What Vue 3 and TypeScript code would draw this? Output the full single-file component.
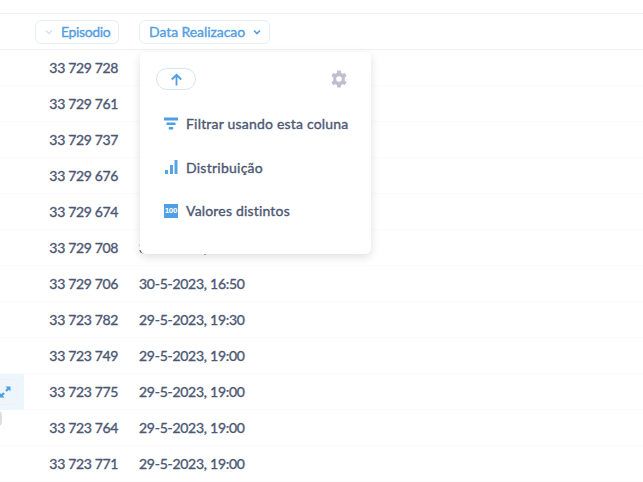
<script setup lang="ts">
interface Row { id: string; date: string }
const rows: Row[] = [
  { id: '33 729 728', date: '' },
  { id: '33 729 761', date: '' },
  { id: '33 729 737', date: '' },
  { id: '33 729 676', date: '' },
  { id: '33 729 674', date: '' },
  { id: '33 729 708', date: '30-5-2023, 16:50' },
  { id: '33 729 706', date: '30-5-2023, 16:50' },
  { id: '33 723 782', date: '29-5-2023, 19:30' },
  { id: '33 723 749', date: '29-5-2023, 19:00' },
  { id: '33 723 775', date: '29-5-2023, 19:00' },
  { id: '33 723 764', date: '29-5-2023, 19:00' },
  { id: '33 723 771', date: '29-5-2023, 19:00' },
]
</script>

<template>
  <div class="page">
    <div class="top"></div>
    <div class="head">
      <div class="pill first">
        <svg class="chev faint" width="8" height="6" viewBox="0 0 8 6"><path d="M1 1.500 4 4.500 7 1.500" fill="none" stroke="currentColor" stroke-width="1.400"/></svg>
        <span>Episodio</span>
      </div>
      <div class="pill second">
        <span>Data Realizacao</span>
        <svg class="chev" width="8" height="6" viewBox="0 0 8 6"><path d="M1 1.500 4 4.500 7 1.500" fill="none" stroke="currentColor" stroke-width="1.600"/></svg>
      </div>
    </div>
    <div class="body">
      <div v-for="(r, i) in rows" :key="r.id" class="row">
        <div class="gutter" :class="{ hover: i === 9 }">
          <div v-if="i === 9" class="expand">
            <svg width="12" height="12" viewBox="0 0 12 12"><path d="M6.500 0.500H11.500V5.500L9.800 3.800 7.800 5.800 6.200 4.200 8.200 2.200ZM5.500 11.500H0.500V6.500L2.200 8.200 4.200 6.200 5.800 7.800 3.800 9.800Z" fill="#509ee3"/></svg>
          </div>
        </div>
        <div class="id">{{ r.id }}</div>
        <div class="date">{{ r.date }}</div>
      </div>
    </div>
    <div class="stub"></div>

    <div class="popover">
      <div class="pop-top">
        <div class="sort">
          <svg width="13" height="13" viewBox="0 0 13 13"><path d="M6.500 12.500V2M1.800 6.500 6.500 1.800 11.200 6.500" fill="none" stroke="#509ee3" stroke-width="1.800"/></svg>
        </div>
        <svg class="gear" width="18" height="18" viewBox="0 0 18 18">
          <path fill-rule="evenodd" fill="#bfbfd0" d="M7.300 0.500H10.700L11.200 3 12.500 3.700 14.900 2.900 16.600 5.800 14.700 7.500V9V10.500L16.600 12.200 14.900 15.100 12.500 14.300 11.200 15 10.700 17.500H7.300L6.800 15 5.500 14.300 3.100 15.100 1.400 12.200 3.300 10.500V7.500L1.400 5.800 3.100 2.900 5.500 3.700 6.800 3ZM9 6.200A2.800 2.800 0 1 0 9 11.800 2.800 2.800 0 0 0 9 6.200Z"/>
        </svg>
      </div>
      <div class="item filter">
        <svg class="ic" width="14" height="14" viewBox="0 0 14 14"><path fill="#509ee3" d="M0 0.500H14V3.500H0ZM2.500 5.500H11.500V8H2.500ZM4.800 10H9.200V12.500H4.800Z"/></svg>
        <span>Filtrar usando esta coluna</span>
      </div>
      <div class="item dist">
        <svg class="ic" width="14" height="14" viewBox="0 0 14 14"><path fill="#509ee3" d="M1 10H4V14H1ZM6 5H9V14H6ZM10.500 0H13.500V14H10.500Z" opacity=".95"/></svg>
        <span>Distribuição</span>
      </div>
      <div class="item vals">
        <span class="hundred">100</span>
        <span>Valores distintos</span>
      </div>
    </div>
  </div>
</template>

<style>
html, body { margin: 0; background: #fff; }
</style>

<style scoped>
.page {
  position: relative;
  width: 643px;
  height: 482px;
  overflow: hidden;
  font-family: Lato, sans-serif;
  font-size: 14px;
  font-weight: 400;
  -webkit-text-stroke: 0.35px currentColor;
  color: #4c5773;
  background: #fff;
}
.top { height: 13px; border-bottom: 1px solid #f0f0f3; }
.head {
  display: flex;
  align-items: center;
  height: 35px;
  border-bottom: 1px solid #f0f0f3;
  padding-left: 35px;
  gap: 20px;
}
.pill {
  display: flex;
  align-items: center;
  height: 24px;
  box-sizing: border-box;
  border: 1px solid #e3effb;
  border-radius: 6px;
  color: #509ee3;
  white-space: nowrap;
}
.first { width: 84px; padding-left: 9px; gap: 8px; letter-spacing: -0.35px; }
.second { width: 131px; padding-left: 9px; gap: 8px; letter-spacing: -0.07px; }
.chev { flex: none; }
.faint { color: #cfe3f6; }
.row {
  display: flex;
  align-items: center;
  height: 36px;
  border-bottom: 1px solid #fbfbfc;
  box-sizing: border-box;
}
.gutter {
  width: 24px;
  height: 36px;
  flex: none;
  display: flex;
  align-items: center;
}
.gutter.hover { background: #eef6fd; }
.expand {
  width: 18px;
  height: 26px;
  box-sizing: border-box;
  border: 1px solid #f6eeee;
  border-left: 0;
  border-radius: 0 6px 6px 0;
  display: flex;
  align-items: center;
  justify-content: flex-start;
  overflow: hidden;
}
.expand svg { margin-left: -1px; flex: none; }
.id { width: 94px; text-align: right; white-space: nowrap; letter-spacing: -0.35px; }
.date { margin-left: 21px; white-space: nowrap; letter-spacing: -0.27px; }
.stub {
  position: absolute;
  left: -6px;
  top: 411px;
  width: 8px;
  height: 15px;
  background: #dedede;
  border-radius: 4px;
}
.popover {
  position: absolute;
  left: 140px;
  top: 52px;
  width: 231px;
  height: 202px;
  background: #fff;
  border-radius: 6px;
  box-shadow: 0 3px 10px rgba(0, 0, 0, 0.13);
  padding: 16px 16px 0;
  box-sizing: border-box;
}
.pop-top {
  display: flex;
  align-items: center;
  justify-content: space-between;
  height: 22px;
  padding-right: 7px;
  margin-bottom: 12px;
}
.sort {
  width: 40px;
  height: 22px;
  box-sizing: border-box;
  border: 1px solid #d4e6f8;
  border-radius: 11px;
  display: flex;
  align-items: center;
  justify-content: center;
}
.item {
  display: flex;
  align-items: center;
  height: 43.500px;
  padding-left: 8px;
  gap: 8px;
  white-space: nowrap;
}
.filter { letter-spacing: 0.2px; }
.dist { letter-spacing: 0.25px; }
.vals { letter-spacing: 0.18px; }
.ic { flex: none; }
.hundred {
  width: 14px;
  height: 14px;
  flex: none;
  background: #509ee3;
  color: #fff;
  font-size: 8px;
  font-weight: 700;
  letter-spacing: -0.2px;
  line-height: 14px;
  text-align: center;
  font-family: "Liberation Sans", sans-serif;
  -webkit-text-stroke: 0;
}
</style>
